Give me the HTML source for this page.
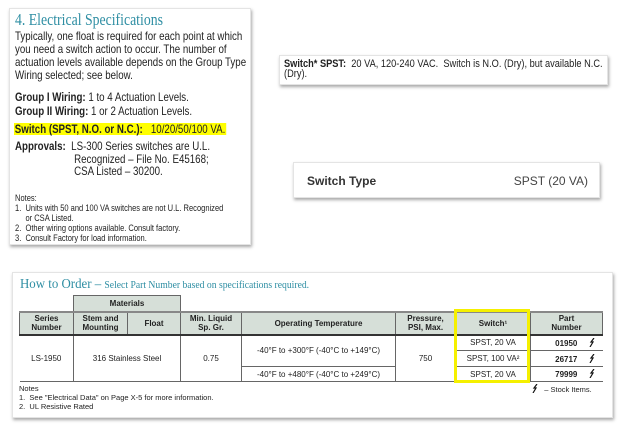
<!DOCTYPE html>
<html><head><meta charset="utf-8"><style>
*{margin:0;padding:0;box-sizing:border-box}
body{width:624px;height:432px;background:#fff;position:relative;overflow:hidden;font-family:"Liberation Sans",sans-serif;color:#222}
.box{position:absolute;background:#fff;box-shadow:1px 2px 3px rgba(0,0,0,.35);border:1px solid #e4e4e4;overflow:hidden}
.ab{position:absolute;white-space:nowrap;transform-origin:0 0}
.c{transform:scaleX(.81)}
.n{font-size:12px}
.nt{font-size:9.3px}
table{border-collapse:collapse;position:absolute;font-size:8px;text-align:center}
td{border:1px solid #666;padding:0;line-height:9px}
.h{background:#d6dfd8;font-weight:bold}
svg.b{width:6px;height:9px;vertical-align:-1px}
</style></head><body>
<div class="box" style="left:9px;top:8px;width:242px;height:237px">
 <div class="ab c" style="left:5px;top:1px;font-family:'Liberation Serif',serif;font-size:17px;color:#2e8ea3">4. Electrical Specifications</div>
 <div class="ab n c" style="left:5px;top:21px;line-height:13px">Typically, one float is required for each point at which<br>you need a switch action to occur. The number of<br>actuation levels available depends on the Group Type<br>Wiring selected; see below.</div>
 <div class="ab n c" style="left:5px;top:81px"><b>Group I Wiring:</b> 1 to 4 Actuation Levels.</div>
 <div class="ab n c" style="left:5px;top:95px"><b>Group II Wiring:</b> 1 or 2 Actuation Levels.</div>
 <div class="ab n c" style="left:4px;top:114px;background:#ffff00;padding:0 1px;line-height:12px"><b>Switch (SPST, N.O. or N.C.):</b>&nbsp;&nbsp; 10/20/50/100 VA.</div>
 <div class="ab n c" style="left:5px;top:131px;line-height:12.5px"><b>Approvals:</b>&nbsp; LS-300 Series switches are U.L.<br><span style="padding-left:73px">Recognized – File No. E45168;</span><br><span style="padding-left:73px">CSA Listed – 30200.</span></div>
 <div class="ab nt c" style="left:5px;top:184px;line-height:10px">Notes:<br>1.&nbsp; Units with 50 and 100 VA switches are not U.L. Recognized<br>&nbsp;&nbsp;&nbsp;&nbsp; or CSA Listed.<br>2.&nbsp; Other wiring options available. Consult factory.<br>3.&nbsp; Consult Factory for load information.</div>
</div>
<div class="box" style="left:279px;top:55px;width:329px;height:30px">
 <div class="ab" style="left:4px;top:3px;font-size:11px;line-height:10px;transform:scaleX(.84)"><b>Switch* SPST:</b>&nbsp; 20 VA, 120-240 VAC.&nbsp; Switch is N.O. (Dry), but available N.C.<br>(Dry).</div>
</div>
<div class="box" style="left:293px;top:162px;width:307px;height:36px">
 <div class="ab" style="left:13px;top:11px;font-size:12px;font-weight:bold;color:#333">Switch Type</div>
 <div class="ab" style="right:11px;top:11px;font-size:12px;color:#444">SPST (20 VA)</div>
</div>
<div class="box" style="left:12px;top:272px;width:601px;height:146px">
 <div class="ab" style="left:7px;top:4px;font-family:'Liberation Serif',serif;font-size:14px;color:#2e8ea3;transform:scaleX(.92)">How to Order – <span style="font-size:10.5px">Select Part Number based on specifications required.</span></div>
</div>
<table style="left:19px;top:295px;width:584px">
<tr style="height:16px"><td style="border:none;width:54px"></td><td class="h" colspan="2" style="border-bottom:1px solid #666">Materials</td><td colspan="6" style="border:none"></td></tr>
<tr style="height:23px;border-bottom:2px solid #333;border-top:2px solid #888"><td class="h" style="width:54px">Series<br>Number</td><td class="h" style="width:54px">Stem and<br>Mounting</td><td class="h" style="width:53px">Float</td><td class="h" style="width:61px">Min. Liquid<br>Sp. Gr.</td><td class="h" style="width:154px">Operating Temperature</td><td class="h" style="width:60px">Pressure,<br>PSI, Max.</td><td class="h" style="width:75px">Switch¹</td><td class="h">Part<br>Number</td></tr>
<tr style="height:16px"><td rowspan="3" style="border-left:none">LS-1950</td><td rowspan="3" colspan="2">316 Stainless Steel</td><td rowspan="3">0.75</td><td rowspan="2">-40°F to +300°F (-40°C to +149°C)</td><td rowspan="3">750</td><td>SPST, 20 VA</td><td style="border-right:none;text-align:right;padding-right:8px"><b>01950</b> &nbsp;&nbsp;&nbsp;&nbsp;<svg class="b" viewBox="0 0 6 9"><path d="M5 0L2 4H4L1 9" stroke="#111" stroke-width="1.2" fill="none"/></svg></td></tr>
<tr style="height:16px"><td>SPST, 100 VA²</td><td style="border-right:none;text-align:right;padding-right:8px"><b>26717</b> &nbsp;&nbsp;&nbsp;&nbsp;<svg class="b" viewBox="0 0 6 9"><path d="M5 0L2 4H4L1 9" stroke="#111" stroke-width="1.2" fill="none"/></svg></td></tr>
<tr style="height:15px"><td>-40°F to +480°F (-40°C to +249°C)</td><td>SPST, 20 VA</td><td style="border-right:none;text-align:right;padding-right:8px"><b>79999</b> &nbsp;&nbsp;&nbsp;&nbsp;<svg class="b" viewBox="0 0 6 9"><path d="M5 0L2 4H4L1 9" stroke="#111" stroke-width="1.2" fill="none"/></svg></td></tr>
</table>
<div class="ab" style="left:454px;top:309px;width:76px;height:74px;border:3px solid #f5f000"></div>
<div class="ab" style="left:19px;top:384px;font-size:7.5px;line-height:9px">Notes<br>1.&nbsp; See "Electrical Data" on Page X-5 for more information.<br>2.&nbsp; UL Resistive Rated</div>
<div class="ab" style="left:532px;top:384px;font-size:7.5px"><svg class="b" viewBox="0 0 6 9"><path d="M5 0L2 4H4L1 9" stroke="#111" stroke-width="1.2" fill="none"/></svg>&nbsp;&nbsp; – Stock Items.</div>
</body></html>
